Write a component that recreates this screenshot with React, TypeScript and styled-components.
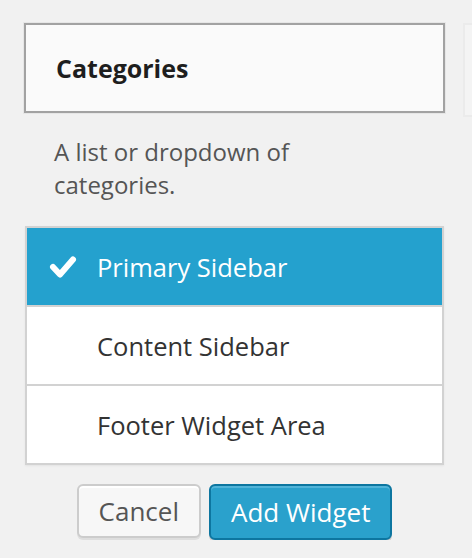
import styled, { createGlobalStyle } from "styled-components";

const GlobalStyle = createGlobalStyle`
  body {
    margin: 0;
    background: #f1f1f1;
    font-family: "Open Sans", "Liberation Sans", sans-serif;
    overflow: hidden;
  }
`;

interface Area {
  name: string;
  selected?: boolean;
}

const areas: Area[] = [
  { name: "Primary Sidebar", selected: true },
  { name: "Content Sidebar" },
  { name: "Footer Widget Area" },
];

const CheckIcon = () => (
  <svg width="28" height="24" viewBox="0 0 28 24">
    <polyline
      points="4,12 11,19.5 24,4.5"
      fill="none"
      stroke="#fff"
      strokeWidth="6"
      strokeLinecap="round"
      strokeLinejoin="round"
    />
  </svg>
);

const App = () => {
  return (
    <>
      <GlobalStyle />
      <Page>
        <Widget>
          <WidgetTop>
            <Title>Categories</Title>
          </WidgetTop>
          <Description>A list or dropdown of categories.</Description>
          <AreaList>
            {areas.map((area) => (
              <AreaRow key={area.name} $selected={area.selected}>
                <Check>{area.selected && <CheckIcon />}</Check>
                {area.name}
              </AreaRow>
            ))}
          </AreaList>
          <Actions>
            <Button>Cancel</Button>
            <Button $primary>Add Widget</Button>
          </Actions>
        </Widget>
        <NextWidget />
      </Page>
    </>
  );
};

export default App;

const Page = styled.div`
  display: flex;
  align-items: flex-start;
  gap: 18px;
  width: 472px;
  box-sizing: border-box;
  padding: 23px 0 0 24px;
`;

const Widget = styled.div`
  width: 421px;
  flex-shrink: 0;
`;

const WidgetTop = styled.div`
  height: 90px;
  box-sizing: border-box;
  display: flex;
  align-items: center;
  padding-left: 30px;
  background: #fafafa;
  border: 2px solid #a2a2a2;
  box-shadow: 0 0 0 1px #e6e6e6;
`;

const Title = styled.h3`
  margin: 0;
  font-size: 25px;
  font-weight: 700;
  color: #1e1e1e;
`;

const Description = styled.p`
  margin: 22px 0 0 30px;
  max-width: 320px;
  font-size: 24px;
  line-height: 33px;
  color: #555;
`;

const AreaList = styled.div`
  margin: 25px 1px 0;
  background: #fff;
  border: 2px solid #d2d2d2;
  box-shadow: 0 1px 2px rgba(0, 0, 0, 0.06);
`;

const AreaRow = styled.div<{ $selected?: boolean }>`
  height: 77px;
  display: flex;
  align-items: center;
  font-size: 25.5px;
  color: ${(p) => (p.$selected ? "#fff" : "#333")};
  background: ${(p) => (p.$selected ? "#24a1ce" : "#fff")};
  & + & {
    border-top: 2px solid #d2d2d2;
  }
`;

const Check = styled.span`
  width: 70px;
  display: flex;
  justify-content: center;
  padding-left: 2px;
  box-sizing: border-box;
`;

const Actions = styled.div`
  display: flex;
  justify-content: center;
  align-items: flex-start;
  gap: 8px;
  margin-top: 19px;
`;

const Button = styled.button<{ $primary?: boolean }>`
  font-family: "Open Sans", "Liberation Sans", sans-serif;
  font-size: 26px;
  height: ${(p) => (p.$primary ? "56px" : "54px")};
  padding: 0 20px;
  border-radius: 6px;
  border: 2px solid ${(p) => (p.$primary ? "#0d76a0" : "#cccccc")};
  background: ${(p) => (p.$primary ? "#2aa1cc" : "#f7f7f7")};
  color: ${(p) => (p.$primary ? "#fff" : "#555")};
  box-shadow: ${(p) =>
    p.$primary
      ? "inset 0 2px 0 rgba(120, 200, 230, 0.5), 0 2px 0 rgba(0, 0, 0, 0.15)"
      : "inset 0 2px 0 #fff, 0 2px 0 rgba(0, 0, 0, 0.08)"};
  cursor: pointer;
`;

const NextWidget = styled.div`
  flex: 1;
  height: 90px;
  background: #f4f4f4;
  border: 2px solid #ebebeb;
  border-right: none;
`;
